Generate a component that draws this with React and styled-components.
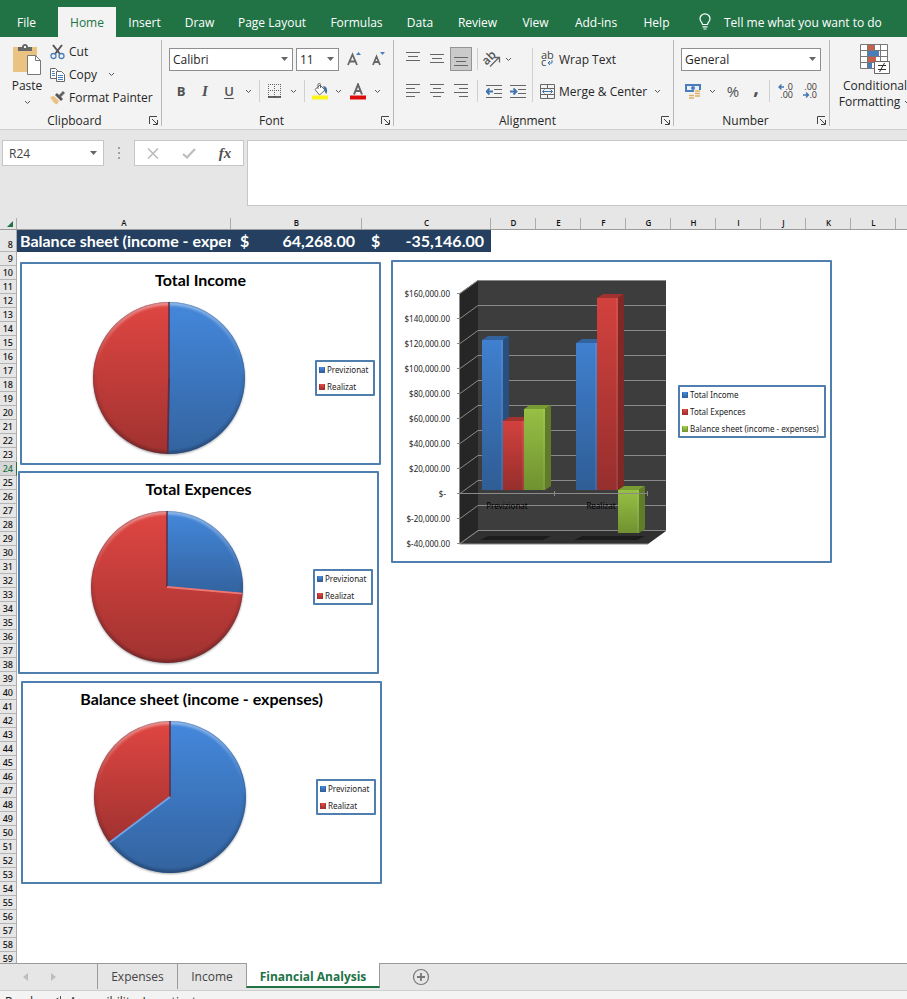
import * as React from "react";
import styled, { createGlobalStyle, css } from "styled-components";

const GlobalStyle = createGlobalStyle`
    * {
        box-sizing: border-box;
    }

    body {
        margin: 0;
        overflow: hidden;
        font-family: "Open Sans", "Noto Sans", sans-serif;
        font-size: 12px;
        color: #262626;
        background: #e6e6e6;
    }

    button, input, select, textarea {
        font: inherit;
        color: inherit;
        margin: 0;
        padding: 0;
        border: 0;
        background: none;
        outline: 0;
    }

    svg {
        display: block;
        flex: none;
    }
`;

/* the status bar runs a little past the bottom of the window */
const Window = styled.div`
    display: flex;
    flex-direction: column;
    height: calc(100vh + 14px);
    overflow: hidden;
`;

const MenuBar = styled.nav`
    display: flex;
    flex: none;
    align-items: flex-end;
    height: 37px;
    background: #217346;
    color: #fff;
    overflow: hidden;
`;

const MenuTab = styled.button`
    flex: none;
    width: ${props => props.$width}px;
    height: 30px;
    margin-right: ${props => props.$first ? 5 : 0}px;
    white-space: nowrap;
    background: ${props => props.$active ? '#f3f3f3' : 'transparent'};
    color: ${props => props.$active ? '#217346' : '#fff'};
`;

const TellMe = styled.button`
    display: flex;
    flex: none;
    align-items: center;
    gap: 12px;
    height: 30px;
    margin-left: 16px;
    color: #fff;
    white-space: nowrap;
`;

const Ribbon = styled.div`
    display: flex;
    flex: none;
    height: 93px;
    padding: 3px 0 0;
    background: #f3f3f3;
    border-bottom: 1px solid #cfcfcf;
    overflow: hidden;
`;

const Group = styled.section`
    display: flex;
    flex: none;
    flex-direction: column;
    width: ${props => props.$width}px;
    height: 86px;
    border-right: 1px solid #b8b8b8;
`;

const GroupBody = styled.div`
    display: flex;
    flex: none;
    height: 72px;
    padding-left: ${props => props.$pad}px;
`;

const GroupFooter = styled.div`
    display: flex;
    flex: none;
    align-items: center;
    height: 17px;
    padding-right: 3px;
`;

const GroupLabel = styled.span`
    flex: 1;
    text-align: center;
`;

const Column = styled.div`
    display: flex;
    flex-direction: column;
`;

const ToolColumn = styled(Column)`
    gap: 6px;
    padding-top: 6px;
`;

const ToolRow = styled.div`
    display: flex;
    flex: none;
    align-items: center;
    height: 26px;
`;

const IconButton = styled.button`
    display: flex;
    flex: none;
    align-items: center;
    justify-content: center;
    width: ${props => props.$width || 24}px;
    height: 24px;
    color: #505050;
`;

const PressedButton = styled(IconButton)`
    width: 22px;
    margin: 0 1px;
    background: #cacaca;
    border: 1px solid #949494;
`;

const LetterButton = styled(IconButton)`
    font-size: ${props => props.$size || 13}px;
    ${props => props.$kind === 'bold' && css`font-weight: 700;`}
    ${props => props.$kind === 'italic' && css`
        font-family: "Liberation Serif", serif;
        font-style: italic;
        font-weight: 700;
    `}
    ${props => props.$kind === 'underline' && css`
        font-weight: 600;
        text-decoration: underline;
        text-underline-offset: 2px;
    `}
`;

const CommaButton = styled(LetterButton)`
    padding-bottom: 9px;
    line-height: 15px;
`;

const LabelButton = styled.button`
    display: flex;
    flex: none;
    align-items: center;
    gap: 4px;
    height: 23px;
    white-space: nowrap;
`;

const BigButton = styled.button`
    display: flex;
    flex: none;
    flex-direction: column;
    align-items: center;
    width: ${props => props.$width}px;
    height: 74px;
    padding-top: 4px;
    line-height: 16px;
    white-space: nowrap;
`;

const BigLabel = styled.span`
    padding-top: 3px;
`;

const BigLine = styled.span`
    display: flex;
    flex: none;
    align-items: center;
    justify-content: center;
    gap: 4px;
    height: 16px;
`;

const Divider = styled.span`
    flex: none;
    width: 1px;
    height: ${props => props.$tall ? 54 : 22}px;
    margin: ${props => props.$tall ? '8px 7px 0 2px' : '0 4px'};
    background: #d0d0d0;
`;

const SelectBox = styled.span`
    display: flex;
    flex: none;
    align-items: center;
    width: ${props => props.$width}px;
    height: 23px;
    padding: 0 4px 0 3px;
    margin-right: 3px;
    background: #fff;
    border: 1px solid #8f8f8f;
`;

const Select = styled.select`
    flex: 1;
    min-width: 0;
    appearance: none;
`;

const FormulaBar = styled.div`
    display: flex;
    flex: none;
    align-items: flex-start;
    height: 76px;
    padding: 10px 0 0 2px;
    background: #e6e6e6;
`;

const NameBox = styled.span`
    display: flex;
    align-items: center;
    width: 102px;
    height: 26px;
    padding: 0 6px;
    background: #fff;
    border: 1px solid #c6c6c6;
`;

const NameInput = styled.input`
    flex: 1;
    min-width: 0;
    color: #444;
`;

const DotHandle = styled.span`
    display: flex;
    align-items: center;
    justify-content: center;
    width: 30px;
    height: 26px;
`;

const FormulaButtons = styled.div`
    display: flex;
    align-items: center;
    justify-content: space-around;
    width: 110px;
    height: 26px;
    margin-right: 3px;
    background: #fff;
    border: 1px solid #c6c6c6;
`;

const FormulaInput = styled.textarea`
    flex: 1;
    min-width: 0;
    height: 66px;
    padding: 4px;
    resize: none;
    background: #fff;
    border: 1px solid #c6c6c6;
    border-right: 0;
`;

const SheetArea = styled.main`
    position: relative;
    flex: 1;
    min-height: 0;
    overflow: hidden;
    background: #fff;
`;

const SheetTable = styled.table`
    width: 941px;
    table-layout: fixed;
    border-collapse: separate;
    border-spacing: 0;
`;

const HeadRow = styled.tr`
    height: 24px;
    background: #e6e6e6;
`;

const ColumnHead = styled.th`
    padding: 10px 0 0;
    border-bottom: 1px solid #9b9b9b;
    font-size: 8px;
    font-weight: 600;
    line-height: 13px;
    color: #111;
    background: linear-gradient(#ababab, #ababab) right bottom / 1px 11px no-repeat;
`;

const Corner = styled(ColumnHead)`
    padding: 12px 4px 0 7px;
`;

const RowHead = styled.th`
    height: ${props => props.$tall ? 22 : 14}px;
    padding: ${props => props.$tall ? '8px 3px 0 0' : '0 3px 0 0'};
    border-right: 1px solid ${props => props.$active ? '#217346' : '#ababab'};
    border-bottom: 1px solid #b5b5b5;
    background: ${props => props.$active ? '#d6d6d6' : '#e6e6e6'};
    color: ${props => props.$active ? '#217346' : '#111'};
    font-family: "Noto Sans", sans-serif;
    font-size: 9px;
    font-weight: 500;
    line-height: 13px;
    text-align: right;
`;

const Cell = styled.td`
    padding: 0;
`;

const TotalCell = styled.td`
    padding: 0 7px 0 3px;
    background: #243f60;
    color: #fff;
    font-family: Lato, "Open Sans", sans-serif;
    font-size: 16px;
    font-weight: 700;
    line-height: 20px;
    white-space: nowrap;
    overflow: hidden;
`;

const Accounting = styled.span`
    display: flex;
    justify-content: space-between;
    padding-left: 6px;
`;

/* charts float over the grid, at the place where they were dropped */
const ChartFrame = styled.figure`
    position: absolute;
    left: ${props => props.$left}px;
    top: ${props => props.$top}px;
    width: ${props => props.$width}px;
    height: ${props => props.$height}px;
    margin: 0;
    background: #fff;
    border: 2px solid #4f7fae;
    border-radius: 1px;
    font-family: "Noto Sans", sans-serif;
`;

const ChartTitle = styled.figcaption`
    padding-top: 6px;
    font-family: Lato, "Open Sans", sans-serif;
    font-size: 16px;
    font-weight: 700;
    line-height: 20px;
    text-align: center;
    color: #000;
`;

const PieBody = styled.div`
    display: flex;
    align-items: center;
    justify-content: space-between;
    padding: 8px 4px 0 67px;
`;

const BarBody = styled.div`
    display: flex;
    align-items: center;
    justify-content: space-between;
    height: 100%;
    padding-right: 4px;
`;

const Legend = styled.ul`
    display: flex;
    flex-direction: column;
    gap: 2px;
    min-width: ${props => props.$width}px;
    margin: 0;
    padding: 0 2px;
    list-style: none;
    border: 2px solid #4f7fae;
    border-radius: 1px;
`;

const LegendItem = styled.li`
    display: flex;
    align-items: center;
    gap: 2px;
    font-size: 8px;
    line-height: 15px;
    white-space: nowrap;
    color: #222;
`;

const Marker = styled.span`
    width: 6px;
    height: 6px;
    border: 1px solid ${props => props.$dark};
    border-top-color: ${props => props.$light};
    background: linear-gradient(${props => props.$light}, ${props => props.$dark});
`;

const SheetTabs = styled.div`
    display: flex;
    flex: none;
    align-items: flex-start;
    height: 28px;
    background: #e6e6e6;
    border-top: 1px solid #9b9b9b;
    border-bottom: 1px solid #cfcfcf;
`;

const TabArrows = styled.div`
    display: flex;
    align-items: center;
    gap: 23px;
    width: 97px;
    height: 25px;
    padding-left: 23px;
`;

const SheetTab = styled.button`
    width: ${props => props.$width}px;
    height: 25px;
    border-left: 1px solid #9b9b9b;
    color: #444;
    white-space: nowrap;
    ${props => props.$active && css`
        margin-top: -1px;
        padding-top: 3px;
        background: #fff;
        border-right: 1px solid #9b9b9b;
        border-bottom: 2px solid #217346;
        color: #217346;
        font-weight: 700;
    `}
`;

const AddSheet = styled.button`
    margin: 4px 0 0 32px;
`;

const StatusBar = styled.footer`
    display: flex;
    flex: none;
    align-items: center;
    gap: 14px;
    height: 22px;
    padding-left: 5px;
    background: #f3f3f3;
    line-height: 16px;
`;

const StatusItem = styled.span`
    display: flex;
    align-items: center;
    gap: 5px;
`;

const Chevron = () => (
    <svg width="7" height="5" viewBox="0 0 7 5" fill="none" stroke="#555">
        <path d="M1 1l2.500 2.500L6 1"/>
    </svg>
);

const Caret = () => (
    <svg width="7" height="4" viewBox="0 0 7 4" fill="#666">
        <path d="M0 0h7L3.500 4z"/>
    </svg>
);

const Launcher = () => (
    <svg width="9" height="9" viewBox="0 0 9 9" fill="none" stroke="#444">
        <path d="M.5 8V.5H8M3 3l5 5M8.500 4v4.500H4"/>
    </svg>
);

const BulbIcon = () => (
    <svg width="14" height="18" viewBox="0 0 14 18" fill="none" stroke="#fff" strokeWidth="1.200">
        <path d="M4.500 11.500C4.500 9.500 2 8.600 2 5.800a5 5 0 0 1 10 0c0 2.800-2.500 3.700-2.500 5.700zM4.500 13.800h5M5.500 16h3"/>
    </svg>
);

const PasteIcon = () => (
    <svg width="28" height="31" viewBox="0 0 28 31">
        <path d="M0 3h24v25H0z" fill="#eac282"/>
        <path d="M5 7V3h4c0-4 6-4 6 0h4v4z" fill="#666"/>
        <path d="M11 2h2v2h-2z" fill="#f3f3f3"/>
        <path d="M14.500 11.500h8l5 5v14h-13z" fill="#fff" stroke="#777"/>
        <path d="M22.500 11.500v5h5" fill="none" stroke="#777"/>
    </svg>
);

const CutIcon = () => (
    <svg width="15" height="16" viewBox="0 0 15 16" fill="none">
        <path d="M3 1l7 9M12 1L5 10" stroke="#555" strokeWidth="2"/>
        <circle cx="3.500" cy="12" r="2.500" stroke="#4a7ebb" strokeWidth="1.300"/>
        <circle cx="11.500" cy="12" r="2.500" stroke="#4a7ebb" strokeWidth="1.300"/>
    </svg>
);

const CopyIcon = () => (
    <svg width="15" height="14" viewBox="0 0 15 14" stroke="#666">
        <path d="M.5.5h5l2 2v8h-7z" fill="#fff"/>
        <path d="M6.500 3.500h5l3 3v7h-8z" fill="#fff"/>
        <path d="M2 3.500h2.500M2 5.500h3M2 7.500h3M8 7.500h5M8 9.500h5M8 11.500h5" stroke="#4a7ebb"/>
    </svg>
);

const PainterIcon = () => (
    <svg width="15" height="14" viewBox="0 0 15 14">
        <path d="M0 6l4-1 5 5-2 3.500L4 12z" fill="#eac282"/>
        <path d="M5 4l2-2 6 6-2 2z" fill="#555"/>
        <path d="M8.500 4.500L13 0l2 2-4.500 4.500z" fill="#666"/>
    </svg>
);

const GrowIcon = ({small}) => (
    <svg width="14" height="16" viewBox="0 0 14 16">
        <path d={small ? "M2 14L5.500 5.500 9 14M3.300 11h4.500" : "M1 14L5.500 3.500 10 14M2.500 10.500h6"}
              fill="none" stroke="#666" strokeWidth="1.800"/>
        <path d={small ? "M9 1h5l-2.500 3z" : "M9 4h5l-2.500-3z"} fill="#4a7ebb"/>
    </svg>
);

const BorderIcon = () => (
    <svg width="14" height="14" viewBox="0 0 14 14" fill="none" stroke="#666">
        <path d="M0 .5h13M0 6.500h13M.5 0v13M6.500 0v13M12.500 0v13" strokeDasharray="1 1"/>
        <path d="M0 13h13" stroke="#333" strokeWidth="1.500"/>
    </svg>
);

const FillIcon = () => (
    <svg width="17" height="17" viewBox="0 0 17 17">
        <path d="M3 6.500L8 2l5 5-5.500 5z" fill="#fff" stroke="#666"/>
        <path d="M6 6V1.500c0-1.500 2.500-1.500 2.500 0V5" fill="none" stroke="#666"/>
        <path d="M11 3c4 0 5 4 3.500 8-1-1-2-2-2-4z" fill="#3f75ad"/>
        <path d="M0 12.500h16v4H0z" fill="#fbf51c"/>
    </svg>
);

const FontColorIcon = () => (
    <svg width="16" height="17" viewBox="0 0 16 17">
        <path d="M4 11.500L8 1.500l4 10M5.500 8h5" fill="none" stroke="#666" strokeWidth="2"/>
        <path d="M0 12.500h16v4H0z" fill="#e00b0b"/>
    </svg>
);

const lineSets = {
    top: "M0 1.500h14M2 5.500h10M0 9.500h14",
    middle: "M0 3.500h14M2 7.500h10M0 11.500h14",
    bottom: "M0 6.500h14M2 10.500h10M0 14.500h14",
    left: "M0 1.500h14M0 5.500h9M0 9.500h14M0 13.500h9",
    center: "M0 1.500h14M3 5.500h8M0 9.500h14M3 13.500h8",
    right: "M0 1.500h14M5 5.500h9M0 9.500h14M5 13.500h9"
};

const LinesIcon = ({kind}) => (
    <svg width="14" height="16" viewBox="0 0 14 16" fill="none" stroke="#666">
        <path d={lineSets[kind]}/>
    </svg>
);

const IndentIcon = ({flip}) => (
    <svg width="16" height="15" viewBox="0 0 16 15" fill="none">
        <path d="M0 1.500h16M8 5.500h8M8 9.500h8M0 13.500h16" stroke="#666"/>
        <path d={flip ? "M0 7.500h6M3.500 4.500l3 3-3 3" : "M1 7.500h6M3.500 4.500l-3 3 3 3"} stroke="#3f75ad" strokeWidth="1.800"/>
    </svg>
);

const OrientationIcon = () => (
    <svg width="18" height="20" viewBox="0 0 18 20" fill="#555">
        <text x="-1" y="12" fontSize="12" fontWeight="600" transform="rotate(-45 7 9)">ab</text>
        <path d="M7 17.500l9-9M11.500 8.500h5v5" fill="none" stroke="#666" strokeWidth="1.300"/>
    </svg>
);

const WrapIcon = () => (
    <svg width="15" height="20" viewBox="0 0 15 20" fill="#444">
        <text x="1" y="10" fontSize="11">ab</text>
        <text x="1" y="17" fontSize="11">c</text>
        <path d="M12 11v3H8.500M10 12l-2 2 2 2" fill="none" stroke="#3f75ad"/>
    </svg>
);

const MergeIcon = () => (
    <svg width="15" height="15" viewBox="0 0 15 15" fill="none">
        <path d="M.5.500h14v14H.5zM.5 4.500h14M.5 10.500h14M7.500.5v4M7.500 10.500v4" stroke="#666"/>
        <path d="M2.500 7.500h10M4.500 5.500l-2 2 2 2M10.500 5.500l2 2-2 2" stroke="#3f75ad"/>
    </svg>
);

const CurrencyIcon = () => (
    <svg width="16" height="16" viewBox="0 0 16 16">
        <path d="M0 1h16v8H0z" fill="#4a7ebb"/>
        <path d="M2 3h12v4H2z" fill="#e9f0f8"/>
        <circle cx="8" cy="5" r="2" fill="#4a7ebb"/>
        <path d="M9 7h7v9H3v-5h6z" fill="#f3f3f3"/>
        <path d="M10 8h5M10 10.500h5M10 13h5M4 12.500h5M4 15h5" stroke="#dfb066" strokeWidth="1.700"/>
    </svg>
);

const DecimalIcon = ({less}) => (
    <svg width="16" height="18" viewBox="0 0 16 18" fill="#333" fontSize="9">
        <text x="15" y="8" textAnchor="end">{less ? '.00' : '.0'}</text>
        <text x="15" y="16" textAnchor="end">{less ? '.0' : '.00'}</text>
        <path d={less ? "M1 13h5M4 10.500L6.500 13l-2.500 2.500" : "M1 5h5M3.500 2.500L1 5l2.500 2.500"}
              fill="none" stroke="#3f75ad" strokeWidth="1.300"/>
    </svg>
);

const ConditionalIcon = () => (
    <svg width="30" height="31" viewBox="0 0 30 31">
        <path d="M.5.500h27v24H.5z" fill="#fff"/>
        <path d="M8 1h6v5H8zM8 13h8v5H8z" fill="#c9604b"/>
        <path d="M8 7h11v5H8zM8 19h4v5H8z" fill="#4a7ebb"/>
        <path d="M.5.500h27v24H.5zM.5 6.500h27M.5 12.500h27M.5 18.500h27M7.500.5v24M14.500.5v6M20.500.5v24" fill="none" stroke="#777"/>
        <path d="M14.500 17.500h15v12h-15z" fill="#fff" stroke="#666"/>
        <path d="M18 21.500h8M18 25.500h8M24.500 19l-5 9" stroke="#333" fill="none"/>
    </svg>
);

const palette = {
    blue: {light: '#4488dc', dark: '#33639f'},
    red: {light: '#e04642', dark: '#a03230'},
    green: {light: '#a1cc49', dark: '#789b34'}
};

const menuTabs = [
    ['File', 53], ['Home', 58], ['Insert', 57], ['Draw', 53], ['Page Layout', 92], ['Formulas', 77],
    ['Data', 50], ['Review', 65], ['View', 51], ['Add-ins', 70], ['Help', 51]
];

const columns = [
    ['A', 214], ['B', 131], ['C', 129], ['D', 45], ['E', 45], ['F', 45], ['G', 45],
    ['H', 45], ['I', 45], ['J', 45], ['K', 45], ['L', 45], ['M', 45]
];

const emptyRows = Array.from({length: 51}, (_, i) => i + 9);

const pies = [
    {id: 'income', title: 'Total Income', left: 20, top: 56, angle: 181, edge: '#5c2c48'},
    {id: 'expences', title: 'Total Expences', left: 18, top: 265, angle: 95, edge: '#f07672'},
    {id: 'balance', title: 'Balance sheet (income - expenses)', left: 21, top: 475, angle: 233, edge: '#74a2e6'}
];

const sheets = [['Expenses', 80], ['Income', 69], ['Financial Analysis', 134]];

const point = (angle, r = 76) => {
    const rad = angle * Math.PI / 180;
    return `${80 + r * Math.sin(rad)} ${80 - r * Math.cos(rad)}`;
};

const slice = (from, to) =>
    `M80 80L${point(from)}A76 76 0 ${to - from > 180 ? 1 : 0} 1 ${point(to)}Z`;

const Gradient = ({id, color}) => (
    <linearGradient id={id} x1="0" y1="0" x2="0" y2="1">
        <stop offset="0" stopColor={palette[color].light}/>
        <stop offset="1" stopColor={palette[color].dark}/>
    </linearGradient>
);

const Pie = ({id, angle, edge}) => (
    <svg width="160" height="160" viewBox="0 0 160 160">
        <defs>
            <Gradient id={`${id}-blue`} color="blue"/>
            <Gradient id={`${id}-red`} color="red"/>
            <linearGradient id={`${id}-rim`} x1="0" y1="0" x2="0" y2="1">
                <stop offset="0" stopColor="#fff" stopOpacity=".4"/>
                <stop offset=".4" stopColor="#fff" stopOpacity="0"/>
                <stop offset=".5" stopColor="#000" stopOpacity=".05"/>
                <stop offset="1" stopColor="#000" stopOpacity=".2"/>
            </linearGradient>
            <clipPath id={`${id}-clip`}><circle cx="80" cy="80" r="76"/></clipPath>
            <filter id={`${id}-soft`} x="-10%" y="-10%" width="120%" height="120%"><feGaussianBlur stdDeviation="1.200"/></filter>
        </defs>
        <circle cx="80" cy="81" r="76" fill="#000" opacity=".35" filter={`url(#${id}-soft)`}/>
        <path d={slice(0, angle)} fill={`url(#${id}-blue)`}/>
        <path d={slice(angle, 360)} fill={`url(#${id}-red)`}/>
        <g clipPath={`url(#${id}-clip)`}>
            <circle cx="80" cy="80" r="75" fill="none" stroke={`url(#${id}-rim)`} strokeWidth="5" filter={`url(#${id}-soft)`}/>
            <path d="M80 80V4" stroke="#5c2c48" strokeWidth="1.500"/>
            <path d={`M80 80L${point(angle)}`} stroke={edge} strokeWidth="1.800"/>
        </g>
        <circle cx="80" cy="80" r="75.500" fill="none" stroke="#243a66" strokeOpacity=".25"/>
    </svg>
);

const LegendBox = ({items, width}) => (
    <Legend $width={width}>
        {items.map(([label, color]) => (
            <LegendItem key={label}>
                <Marker $light={palette[color].light} $dark={palette[color].dark}/>
                {label}
            </LegendItem>
        ))}
    </Legend>
);

const axisLabels = [
    '$160,000.00', '$140,000.00', '$120,000.00', '$100,000.00', '$80,000.00', '$60,000.00',
    '$40,000.00', '$20,000.00', '$-', '$-20,000.00', '$-40,000.00'
];

// x, top, bottom of the front face
const bars = [
    ['blue', 482, 340, 490], ['red', 503, 421, 490], ['green', 524, 409, 490],
    ['blue', 576, 343, 490], ['red', 597, 298, 490], ['green', 618, 490, 533]
];

const Bar = ({color, x, top, bottom}) => (
    <g>
        <path d={`M${x} ${top}l6-4h21l-6 4z`} fill={palette[color].dark}/>
        <path d={`M${x + 21} ${top}l6-4V${bottom - 4}l-6 4z`} fill={palette[color].dark}/>
        <path d={`M${x + 21} ${top}l6-4V${bottom - 4}l-6 4z`} fill="#000" opacity=".2"/>
        <path d={`M${x} ${top}h21V${bottom}h-21z`} fill={`url(#bar-${color})`}/>
        <path d={`M${x} ${top}h21V${bottom}h-21z`} fill="#000" opacity=".06"/>
        <path d={`M${x + 20} ${top}V${bottom}`} stroke="#fff" opacity=".15"/>
    </g>
);

const BarPlot = () => (
    <svg width="275" height="295" viewBox="393 264 275 295">
        <defs>
            <Gradient id="bar-blue" color="blue"/>
            <Gradient id="bar-red" color="red"/>
            <Gradient id="bar-green" color="green"/>
        </defs>
        <path d="M478 280h188v251H478z" fill="#3d3d3d"/>
        <path d="M460 293l18-13v251l-18 13z" fill="#262626"/>
        <path d="M460 544l18-13h188l-18 13z" fill="#303030"/>
        <path d="M480 540l8-4h63l-8 4zM574 540l8-4h63l-8 4z" fill="#1c1c1c"/>
        {axisLabels.map((label, i) => (
            <g key={label}>
                <path d={`M457 ${293.5 + i * 25}h3l18-13h188`} fill="none" stroke="#8a8a8a"/>
                <text x={label === '$-' ? 446 : 450} y={297 + i * 25} fontSize="8" fill="#222" textAnchor="end">{label}</text>
            </g>
        ))}
        <path d="M459.500 293v251H648" fill="none" stroke="#8a8a8a"/>
        {bars.map(([color, x, top, bottom]) => (
            <Bar key={`${color}-${x}`} color={color} x={x} top={top} bottom={bottom}/>
        ))}
        <path d="M460 493.500h188M554.500 491v5M647.500 491v5" fill="none" stroke="#8a8a8a"/>
        <text x="507" y="509" fontSize="8" fill="#000" textAnchor="middle">Previzionat</text>
        <text x="601" y="509" fontSize="8" fill="#000" textAnchor="middle">Realizat</text>
    </svg>
);

const PieChart = ({id, title, left, top, angle, edge}) => (
    <ChartFrame $left={left} $top={top} $width={361} $height={203}>
        <ChartTitle>{title}</ChartTitle>
        <PieBody>
            <Pie id={id} angle={angle} edge={edge}/>
            <LegendBox width={60} items={[['Previzionat', 'blue'], ['Realizat', 'red']]}/>
        </PieBody>
    </ChartFrame>
);

const Combo = ({label, options, width}) => (
    <SelectBox $width={width}>
        <Select aria-label={label}>
            {options.map(option => <option key={option}>{option}</option>)}
        </Select>
        <Caret/>
    </SelectBox>
);

const RibbonGroup = ({label, width, pad, children}) => (
    <Group $width={width}>
        <GroupBody $pad={pad}>{children}</GroupBody>
        <GroupFooter>
            <GroupLabel>{label}</GroupLabel>
            <button aria-label={`${label} settings`}><Launcher/></button>
        </GroupFooter>
    </Group>
);

const DropArrow = ({label, width = 14}) => (
    <IconButton $width={width} aria-label={label}><Chevron/></IconButton>
);

const ClipboardGroup = () => (
    <RibbonGroup label="Clipboard" width={162} pad={4}>
        <BigButton $width={46}>
            <PasteIcon/>
            <BigLabel>
                <BigLine>Paste</BigLine>
                <BigLine><Chevron/></BigLine>
            </BigLabel>
        </BigButton>
        <Column>
            <LabelButton><CutIcon/>Cut</LabelButton>
            <LabelButton><CopyIcon/>Copy<BigLine>&nbsp;<Chevron/></BigLine></LabelButton>
            <LabelButton><PainterIcon/>Format Painter</LabelButton>
        </Column>
    </RibbonGroup>
);

const FontGroup = () => (
    <RibbonGroup label="Font" width={232} pad={7}>
        <ToolColumn>
            <ToolRow>
                <Combo label="Font" options={['Calibri', 'Arial']} width={124}/>
                <Combo label="Font size" options={['11', '12', '14']} width={43}/>
                <IconButton aria-label="Increase font size"><GrowIcon/></IconButton>
                <IconButton aria-label="Decrease font size"><GrowIcon small/></IconButton>
            </ToolRow>
            <ToolRow>
                <LetterButton $kind="bold">B</LetterButton>
                <LetterButton $kind="italic" $size={15}>I</LetterButton>
                <LetterButton $kind="underline">U</LetterButton>
                <DropArrow label="Underline style"/>
                <Divider/>
                <IconButton aria-label="Borders" $width={22}><BorderIcon/></IconButton>
                <DropArrow label="Border style"/>
                <Divider/>
                <IconButton aria-label="Fill colour" $width={22}><FillIcon/></IconButton>
                <DropArrow label="Fill colours"/>
                <IconButton aria-label="Font colour" $width={26}><FontColorIcon/></IconButton>
                <DropArrow label="Font colours" width={12}/>
            </ToolRow>
        </ToolColumn>
    </RibbonGroup>
);

const AlignmentGroup = () => (
    <RibbonGroup label="Alignment" width={280} pad={7}>
        <ToolColumn>
            <ToolRow>
                <IconButton aria-label="Top align"><LinesIcon kind="top"/></IconButton>
                <IconButton aria-label="Middle align"><LinesIcon kind="middle"/></IconButton>
                <PressedButton aria-label="Bottom align"><LinesIcon kind="bottom"/></PressedButton>
                <Divider/>
                <IconButton aria-label="Orientation" $width={20}><OrientationIcon/></IconButton>
                <DropArrow label="Orientations" width={12}/>
            </ToolRow>
            <ToolRow>
                <IconButton aria-label="Align left"><LinesIcon kind="left"/></IconButton>
                <IconButton aria-label="Center"><LinesIcon kind="center"/></IconButton>
                <IconButton aria-label="Align right"><LinesIcon kind="right"/></IconButton>
                <Divider/>
                <IconButton aria-label="Decrease indent"><IndentIcon/></IconButton>
                <IconButton aria-label="Increase indent"><IndentIcon flip/></IconButton>
            </ToolRow>
        </ToolColumn>
        <Divider $tall/>
        <ToolColumn>
            <ToolRow><LabelButton><WrapIcon/>Wrap Text</LabelButton></ToolRow>
            <ToolRow>
                <LabelButton><MergeIcon/>Merge &amp; Center</LabelButton>
                <DropArrow label="Merge options" width={20}/>
            </ToolRow>
        </ToolColumn>
    </RibbonGroup>
);

const NumberGroup = () => (
    <RibbonGroup label="Number" width={156} pad={7}>
        <ToolColumn>
            <ToolRow>
                <Combo label="Number format" options={['General', 'Number', 'Currency']} width={140}/>
            </ToolRow>
            <ToolRow>
                <IconButton aria-label="Accounting format"><CurrencyIcon/></IconButton>
                <DropArrow label="Currencies"/>
                <LetterButton $size={15} $width={28}>%</LetterButton>
                <CommaButton $size={20} $kind="bold" $width={18} aria-label="Comma style">,</CommaButton>
                <Divider/>
                <IconButton aria-label="Increase decimal"><DecimalIcon/></IconButton>
                <IconButton aria-label="Decrease decimal"><DecimalIcon less/></IconButton>
            </ToolRow>
        </ToolColumn>
    </RibbonGroup>
);

const Sheet = () => (
    <SheetArea>
        <SheetTable>
            <colgroup>
                <col width="17"/>
                {columns.map(([name, width]) => <col key={name} width={width}/>)}
            </colgroup>
            <thead>
                <HeadRow>
                    <Corner aria-label="Select all">
                        <svg width="6" height="6" viewBox="0 0 6 6"><path d="M6 0v6H0z" fill="#217346"/></svg>
                    </Corner>
                    {columns.map(([name]) => <ColumnHead key={name}>{name}</ColumnHead>)}
                </HeadRow>
            </thead>
            <tbody>
                <tr>
                    <RowHead $tall>8</RowHead>
                    <TotalCell>Balance sheet (income - expenses)</TotalCell>
                    <TotalCell><Accounting><span>$</span><span>64,268.00</span></Accounting></TotalCell>
                    <TotalCell><Accounting><span>$</span><span>-35,146.00</span></Accounting></TotalCell>
                    <Cell colSpan={10}/>
                </tr>
                {emptyRows.map(row => (
                    <tr key={row}>
                        <RowHead $active={row === 24}>{row}</RowHead>
                        <Cell colSpan={13}/>
                    </tr>
                ))}
            </tbody>
        </SheetTable>
        {pies.map(pie => <PieChart key={pie.id} {...pie}/>)}
        <ChartFrame $left={391} $top={54} $width={441} $height={303}>
            <BarBody>
                <BarPlot/>
                <LegendBox width={148} items={[
                    ['Total Income', 'blue'],
                    ['Total Expences', 'red'],
                    ['Balance sheet (income - expenses)', 'green']
                ]}/>
            </BarBody>
        </ChartFrame>
    </SheetArea>
);

class App extends React.Component {
    constructor(props) {
        super(props);
        this.state = {
            menu: 'Home',
            sheet: 'Financial Analysis',
            cell: 'R24'
        };
    }

    handleCell = (event) => {
        this.setState({cell: event.target.value});
    };

    render() {
        const {menu, sheet, cell} = this.state;

        return (
            <Window>
                <GlobalStyle/>
                <MenuBar>
                    {menuTabs.map(([name, width], i) => (
                        <MenuTab key={name} $width={width} $first={i === 0} $active={name === menu}
                                 onClick={() => this.setState({menu: name})}>
                            {name}
                        </MenuTab>
                    ))}
                    <TellMe><BulbIcon/>Tell me what you want to do</TellMe>
                </MenuBar>
                <Ribbon>
                    <ClipboardGroup/>
                    <FontGroup/>
                    <AlignmentGroup/>
                    <NumberGroup/>
                    <BigButton $width={90}>
                        <ConditionalIcon/>
                        <BigLabel>
                            <BigLine>Conditional</BigLine>
                            <BigLine>Formatting <Chevron/></BigLine>
                        </BigLabel>
                    </BigButton>
                </Ribbon>
                <FormulaBar>
                    <NameBox>
                        <NameInput aria-label="Name box" value={cell} onChange={this.handleCell}/>
                        <Caret/>
                    </NameBox>
                    <DotHandle>
                        <svg width="2" height="12" viewBox="0 0 2 12" fill="#a0a0a0">
                            <path d="M0 0h2v2H0zM0 5h2v2H0zM0 10h2v2H0z"/>
                        </svg>
                    </DotHandle>
                    <FormulaButtons>
                        <IconButton aria-label="Cancel">
                            <svg width="12" height="11" viewBox="0 0 12 11" fill="none" stroke="#bdbdbd" strokeWidth="1.600">
                                <path d="M1 .5l10 10M11 .5l-10 10"/>
                            </svg>
                        </IconButton>
                        <IconButton aria-label="Enter">
                            <svg width="14" height="11" viewBox="0 0 14 11" fill="none" stroke="#bdbdbd" strokeWidth="2.200">
                                <path d="M1 6l4 3.500L13 1"/>
                            </svg>
                        </IconButton>
                        <LetterButton $kind="italic" $size={15}>fx</LetterButton>
                    </FormulaButtons>
                    <FormulaInput aria-label="Formula"/>
                </FormulaBar>
                <Sheet/>
                <SheetTabs>
                    <TabArrows>
                        <svg width="5" height="8" viewBox="0 0 5 8" fill="#bdbdbd"><path d="M5 0v8L0 4z"/></svg>
                        <svg width="5" height="8" viewBox="0 0 5 8" fill="#bdbdbd"><path d="M0 0v8l5-4z"/></svg>
                    </TabArrows>
                    {sheets.map(([name, width]) => (
                        <SheetTab key={name} $width={width} $active={name === sheet}
                                  onClick={() => this.setState({sheet: name})}>
                            {name}
                        </SheetTab>
                    ))}
                    <AddSheet aria-label="New sheet">
                        <svg width="18" height="18" viewBox="0 0 18 18" fill="none" stroke="#777">
                            <circle cx="9" cy="9" r="7.500" strokeWidth="1.200"/>
                            <path d="M5 9h8M9 5v8" strokeWidth="1.800"/>
                        </svg>
                    </AddSheet>
                </SheetTabs>
                <StatusBar>
                    <span>Ready</span>
                    <StatusItem>
                        <svg width="11" height="12" viewBox="0 0 11 12" fill="none" stroke="#555">
                            <path d="M7.500 0v8M5.500 2c-3 1-4 3-4 5s2 4 5 4"/>
                        </svg>
                        Accessibility: Investigate
                    </StatusItem>
                </StatusBar>
            </Window>
        );
    }
}

export default App;
